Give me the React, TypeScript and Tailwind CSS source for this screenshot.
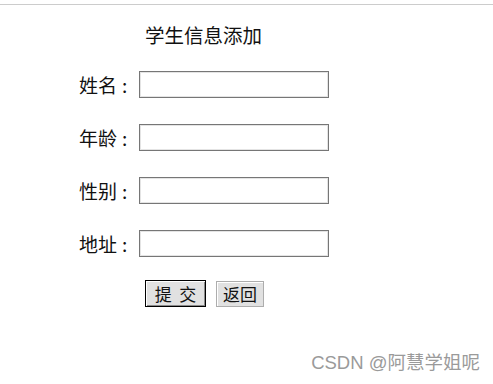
/* 学生信息添加 表单 */

const fields = ['姓名', '年龄', '性别', '地址']

export default function App() {
  return (
    <div className="w-[493px] h-[384px] bg-white relative overflow-hidden font-['Noto_Sans_CJK_SC',sans-serif] text-[#111]">
      {/* 顶部分割线 */}
      <div className="h-[4px]" />
      <div className="h-px bg-[#cccccc]" />

      {/* 标题 */}
      <div className="pl-[145px] pt-[17px] text-[19.5px] leading-[26px]">学生信息添加</div>

      {/* 字段 */}
      <div className="flex flex-col gap-[26px] pt-[23px]">
        {fields.map((f) => (
          <div key={f} className="flex items-center pl-[79px] h-[27px]">
            <span className="w-[60px] text-[19px] leading-[27px] whitespace-nowrap">
              {f}
              <span className="ml-[5px]">:</span>
            </span>
            <input
              type="text"
              className="w-[190px] h-[27px] border border-[#767676] bg-white shadow-[inset_0_0_0_1px_#e4e4e4] outline-none"
            />
          </div>
        ))}
      </div>

      {/* 按钮 */}
      <div className="flex items-center gap-[10px] pl-[145px] pt-[23px]">
        <button className="w-[61px] h-[27px] border border-black bg-[#e1e1e1] shadow-[inset_1px_1px_0_#fff,inset_-1px_-1px_0_#8a8a8a] text-[17px] leading-[20px] whitespace-nowrap">
          提&nbsp;&nbsp;交
        </button>
        <button className="w-[48px] h-[26px] border border-[#adadad] bg-[#e1e1e1] shadow-[inset_1px_1px_0_#fff] text-[17px] leading-[20px] whitespace-nowrap">
          返回
        </button>
      </div>

      {/* 水印 */}
      <div className="absolute right-[13px] top-[351px] text-[18.5px] leading-[24px] text-[#9a9a9a] font-['Liberation_Sans','Noto_Sans_CJK_SC',sans-serif]">
        CSDN @阿慧学姐呢
      </div>
    </div>
  )
}
